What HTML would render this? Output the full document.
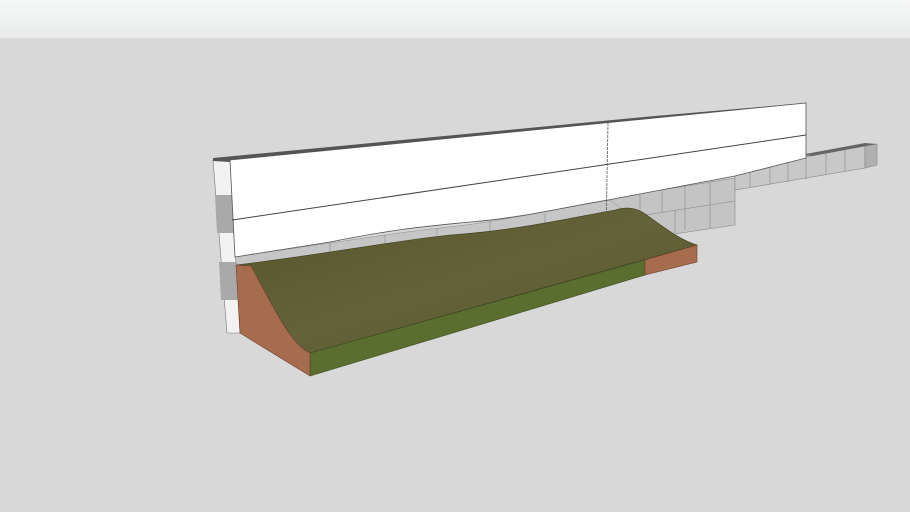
<!DOCTYPE html>
<html><head><style>
html,body{margin:0;padding:0;width:910px;height:512px;overflow:hidden;background:#d9d9d9}
</style></head><body>
<svg width="910" height="512" viewBox="0 0 910 512" xmlns="http://www.w3.org/2000/svg">
<defs>
<linearGradient id="sky" x1="0" y1="0" x2="0" y2="1">
<stop offset="0" stop-color="#f6f7f7"/><stop offset="1" stop-color="#e9ebeb"/>
</linearGradient>
<linearGradient id="grass" x1="0" y1="0" x2="1" y2="1">
<stop offset="0" stop-color="#55552b"/><stop offset="0.5" stop-color="#646238"/><stop offset="1" stop-color="#56562c"/>
</linearGradient>
</defs>
<rect x="0" y="0" width="910" height="38" fill="url(#sky)"/>
<rect x="0" y="38" width="910" height="474" fill="#d8d8d8"/>

<!-- back blocks right -->
<polygon points="600,200 735,178 735,225 600,245" fill="#c4c4c4" stroke="#8a8a8a" stroke-width="0.6"/>
<g stroke="#8a8a8a" stroke-width="0.6" fill="none">
<line x1="600" y1="222" x2="735" y2="201"/>
<line x1="640" y1="194" x2="640" y2="238"/><line x1="662" y1="190" x2="662" y2="212"/>
<line x1="685" y1="186" x2="685" y2="230"/><line x1="710" y1="182" x2="710" y2="205"/>
<line x1="675" y1="210" x2="675" y2="233"/><line x1="710" y1="205" x2="710" y2="228"/>
</g>
<!-- top row extension -->
<polygon points="735,170 865,146 865,168 735,190" fill="#c8c8c8" stroke="#888" stroke-width="0.6"/>
<polygon points="865,146 877,144 877,165 865,168" fill="#b0b0b0" stroke="#888" stroke-width="0.6"/>
<polygon points="800,155 865,143 877,144 812,156" fill="#666" />
<g stroke="#888" stroke-width="0.6">
<line x1="750" y1="167" x2="750" y2="188"/><line x1="770" y1="164" x2="770" y2="185"/>
<line x1="788" y1="160" x2="788" y2="182"/><line x1="806" y1="157" x2="806" y2="179"/>
<line x1="826" y1="153" x2="826" y2="175"/><line x1="845" y1="150" x2="845" y2="172"/>
</g>
<!-- lower blocks strip under panel left -->
<path d="M232,257 C320,245 400,232 440,228 C500,222 560,208 610,200 L630,215 L240,268 Z" fill="#c6c6c6" stroke="#8a8a8a" stroke-width="0.5"/>
<g stroke="#8a8a8a" stroke-width="0.6">
<line x1="330" y1="243" x2="330" y2="256"/><line x1="385" y1="235" x2="385" y2="248"/>
<line x1="437" y1="228" x2="437" y2="241"/><line x1="490" y1="222" x2="490" y2="235"/>
<line x1="545" y1="214" x2="545" y2="226"/>
</g>

<!-- post -->
<polygon points="213,160 230,160 240,333 227,333" fill="#f2f2f2" stroke="#777" stroke-width="0.6"/>
<polygon points="215,195 232,195 234,233 217,233" fill="#a9a9a9"/>
<polygon points="219,262 236,262 238,300 221,300" fill="#a9a9a9"/>
<!-- block tops band -->
<polygon points="213,158 655,116 806,103 806,106 230,162 213,161" fill="#555"/>

<!-- panel -->
<path d="M230,160 L806,103 L806,158 L735,176 L608,200 C560,208 520,218 470,222 C430,226 400,228 330,242 L235,257 Z" fill="#ffffff" stroke="#555" stroke-width="0.8"/>
<line x1="232" y1="220" x2="806" y2="135" stroke="#444" stroke-width="1"/>
<line x1="608" y1="123" x2="606" y2="232" stroke="#555" stroke-width="0.8" stroke-dasharray="3,1"/>

<!-- grass top -->
<path d="M236,265 C320,255 400,240 450,235 C520,230 570,218 615,210 C628,206 638,208 648,216 C665,228 680,240 697,245 L643,260 L310,353 C290,345 270,300 251,266 Z" fill="url(#grass)" stroke="#3d3d20" stroke-width="0.6"/>
<!-- front green face -->
<polygon points="310,353 645,260 645,275 310,376" fill="#5a6e2f" stroke="#3d4a20" stroke-width="0.6"/>
<!-- right brown face -->
<polygon points="645,260 697,245 697,262 645,275" fill="#a76b4d" stroke="#6b4030" stroke-width="0.6"/>
<!-- left brown face -->
<path d="M236,265 L251,266 C270,300 290,345 310,353 L310,376 L240,333 Z" fill="#a76b4d" stroke="#6b4030" stroke-width="0.6"/>
</svg>
</body></html>
